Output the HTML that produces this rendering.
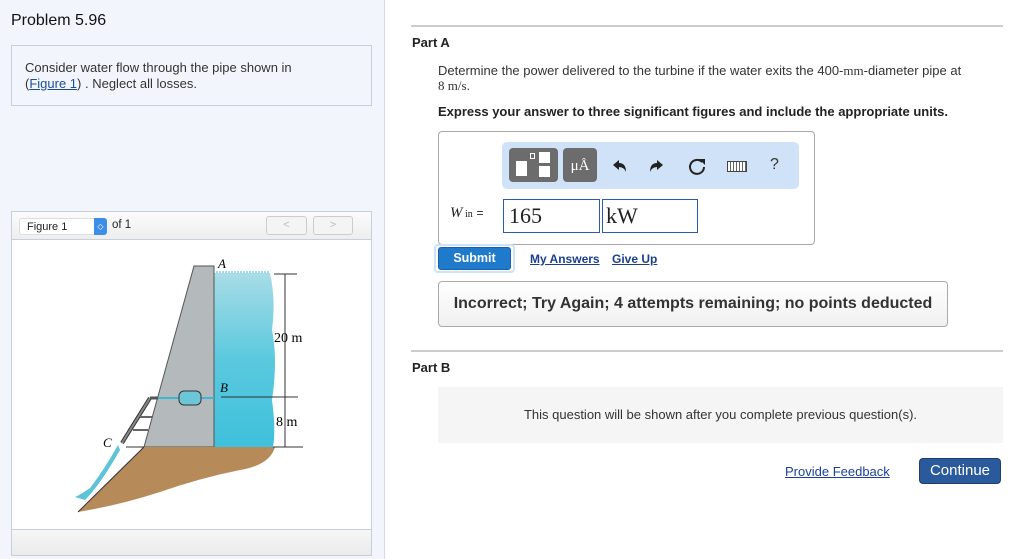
<!DOCTYPE html>
<html><head><style>
*{margin:0;padding:0;box-sizing:border-box}
body{width:1024px;height:559px;position:relative;background:#fff;font-family:"Liberation Sans",Arial,sans-serif;color:#222;overflow:hidden}
.a{position:absolute}
.serif{font-family:"Liberation Serif",serif}
</style></head><body>
<div class="a" style="left:0;top:0;width:385px;height:559px;background:#f2f6fc;border-right:1px solid #d4dbe4"></div>
<div class="a" style="left:11px;top:12px;font-size:16px;color:#111">Problem 5.96</div>
<div class="a" style="left:11px;top:45px;width:361px;height:61px;border:1px solid #c6d0dc;background:#f2f6fc"></div>
<div class="a" style="left:25px;top:60px;font-size:13px;line-height:16px;color:#333">Consider water flow through the pipe shown in<br>(<span style="color:#1a4f9c;text-decoration:underline">Figure 1</span>) . Neglect all losses.</div>

<div class="a" style="left:11px;top:211px;width:361px;height:345px;border:1px solid #c6d0dc;background:#fff"></div>
<div class="a" style="left:12px;top:212px;width:359px;height:28px;background:linear-gradient(#fbfbfb,#eeeeee);border-bottom:1px solid #c6d0dc"></div>
<div class="a" style="left:19px;top:218px;width:88px;height:17px;background:#fff;border:1px solid #ddd;border-radius:3px;font-size:11px;padding:2px 0 0 7px">Figure 1</div>
<div class="a" style="left:94px;top:218px;width:13px;height:17px;background:#3d8ee8;border-radius:0 3px 3px 0;color:#fff;font-size:8px;text-align:center;line-height:17px">◇</div>
<div class="a" style="left:112px;top:219px;font-size:11.5px">of 1</div>
<div class="a" style="left:266px;top:216px;width:41px;height:19px;border:1px solid #ccc;border-radius:3px;background:#f4f4f4;color:#bbb;font-size:11px;text-align:center;line-height:17px">&lt;</div>
<div class="a" style="left:313px;top:216px;width:40px;height:19px;border:1px solid #ccc;border-radius:3px;background:#f4f4f4;color:#bbb;font-size:11px;text-align:center;line-height:17px">&gt;</div>
<div class="a" style="left:12px;top:529px;width:359px;height:26px;background:linear-gradient(#f6f6f6,#ebebeb);border-top:1px solid #c6d0dc"></div>

<svg class="a" style="left:0;top:0" width="385" height="559">
<defs><linearGradient id="w" x1="0" y1="0" x2="0" y2="1"><stop offset="0" stop-color="#a8dce6"/><stop offset="0.5" stop-color="#5ac9de"/><stop offset="1" stop-color="#3fc0dc"/></linearGradient></defs>
<path d="M214 273 L270 273 Q276 300 272 330 Q278 360 272 400 Q276 430 273 447 L214 447Z" fill="url(#w)"/>
<path d="M194 266 L214 266 L214 447 L144 447Z" fill="#b4b9bc" stroke="#555" stroke-width="1"/>
<path d="M144 447 L275 447 Q270 465 240 470 Q200 478 160 492 Q120 505 78 512Z" fill="#b78a5a"/>
<path d="M144 447 L78 512" stroke="#333" stroke-width="1"/>
<path d="M118 445 Q104 470 90 488 Q80 495 75 497 L85 500 Q100 485 120 450Z" fill="#5cc3d8"/>
<line x1="158" y1="398" x2="214" y2="398" stroke="#3fb4d4" stroke-width="2"/>
<rect x="179" y="391" width="22" height="14" rx="5" fill="#6cc6d8" stroke="#333"/>
<path d="M150 398 L122 443" stroke="#333" stroke-width="4"/>
<path d="M150 398 L122 443" stroke="#888" stroke-width="2"/>
<line x1="150" y1="398" x2="158" y2="398" stroke="#555" stroke-width="3"/>
<line x1="140" y1="417" x2="152" y2="417" stroke="#666" stroke-width="2"/>
<line x1="133" y1="430" x2="148" y2="430" stroke="#666" stroke-width="2"/>
<line x1="126" y1="447" x2="144" y2="447" stroke="#333"/>
<line x1="216" y1="272" x2="270" y2="272" stroke="#3fb4d4" stroke-dasharray="2 1"/>
<line x1="274" y1="274" x2="297" y2="274" stroke="#333"/>
<line x1="285" y1="274" x2="285" y2="447" stroke="#333"/>
<line x1="221" y1="397" x2="298" y2="397" stroke="#333"/>
<line x1="273" y1="447" x2="303" y2="447" stroke="#333"/>
<text x="218" y="268" font-family="Liberation Serif" font-style="italic" font-size="13">A</text>
<text x="220" y="392" font-family="Liberation Serif" font-style="italic" font-size="13">B</text>
<text x="103" y="447" font-family="Liberation Serif" font-style="italic" font-size="13">C</text>
<text x="274" y="342" font-family="Liberation Serif" font-size="14">20 m</text>
<text x="276" y="426" font-family="Liberation Serif" font-size="14">8 m</text>
</svg>

<div class="a" style="left:411px;top:25px;width:592px;height:2px;background:#ccc"></div>
<div class="a" style="left:412px;top:35px;font-size:13px;font-weight:bold;color:#222">Part A</div>
<div class="a" style="left:438px;top:63px;font-size:13px;line-height:15px;color:#333">Determine the power delivered to the turbine if the water exits the 400-<span class="serif">mm</span>-diameter pipe at<br><span class="serif">8 m/s</span>.</div>
<div class="a" style="left:438px;top:104px;font-size:13px;font-weight:bold;color:#222">Express your answer to three significant figures and include the appropriate units.</div>

<div class="a" style="left:438px;top:131px;width:377px;height:114px;border:1px solid #aaa;border-radius:4px"></div>
<div class="a" style="left:502px;top:142px;width:297px;height:47px;background:#cfe2f7;border-radius:5px"></div>
<div class="a" style="left:509px;top:148px;width:49px;height:34px;background:#6c6c6c;border-radius:4px"></div>
<div class="a" style="left:516px;top:161px;width:11px;height:15px;background:#fff"></div>
<div class="a" style="left:530px;top:153px;width:5px;height:6px;border:1px solid #fff"></div>
<div class="a" style="left:539px;top:152px;width:11px;height:11px;background:#fff"></div>
<div class="a" style="left:539px;top:166px;width:11px;height:11px;background:#fff"></div>
<div class="a" style="left:563px;top:148px;width:34px;height:34px;background:#6c6c6c;border-radius:4px;color:#fff;font-family:'Liberation Serif',serif;font-size:15px;text-align:center;line-height:36px">μÅ</div>
<svg class="a" style="left:610px;top:159px" width="60" height="20">
<path d="M3 6 L9 1 L9 4 Q16 4 16 13 Q14 8 9 8 L9 11Z" fill="#222"/>
<path d="M53 6 L47 1 L47 4 Q40 4 40 13 Q42 8 47 8 L47 11Z" fill="#222"/>
</svg>
<svg class="a" style="left:688px;top:157px" width="20" height="20">
<path d="M14 5 A7 7 0 1 0 16 10" fill="none" stroke="#222" stroke-width="2"/>
<path d="M11 2 L17 2 L17 8Z" fill="#222"/>
</svg>
<div class="a" style="left:727px;top:161px;width:20px;height:11px;border:1px solid #444;background:repeating-linear-gradient(90deg,#fff 0 2px,#666 2px 3px)"></div>
<div class="a" style="left:770px;top:156px;font-size:16px;color:#333">?</div>
<div class="a serif" style="left:450px;top:205px;font-size:15px;font-style:italic">W<span style="font-size:10px;font-style:normal"> in</span> <span style="font-family:'Liberation Sans';font-style:normal;font-size:12px">=</span></div>
<div class="a serif" style="left:503px;top:199px;width:97px;height:34px;border:1px solid #2a5db0;font-size:22px;padding:3px 0 0 5px">165</div>
<div class="a serif" style="left:602px;top:199px;width:96px;height:34px;border:1px solid #2a5db0;font-size:22px;padding:3px 0 0 3px">kW</div>

<div class="a" style="left:434px;top:244px;width:81px;height:29px;border:2px solid #cfe2f7;border-radius:4px"></div>
<div class="a" style="left:438px;top:247px;width:73px;height:23px;background:#1f7acb;border:1px solid #1a62a8;border-radius:3px;color:#fff;font-size:12.5px;font-weight:bold;text-align:center;line-height:21px">Submit</div>
<div class="a" style="left:530px;top:252px;font-size:12px;font-weight:bold;color:#1a3f8c;text-decoration:underline">My Answers</div>
<div class="a" style="left:612px;top:252px;font-size:12px;font-weight:bold;color:#1a3f8c;text-decoration:underline">Give Up</div>

<div class="a" style="left:438px;top:281px;width:510px;height:46px;border:1px solid #aaa;border-radius:4px;background:linear-gradient(#fff,#f0f0f0);font-size:16px;font-weight:bold;color:#333;text-align:center;line-height:44px">Incorrect; Try Again; 4 attempts remaining; no points deducted</div>

<div class="a" style="left:411px;top:350px;width:592px;height:2px;background:#ccc"></div>
<div class="a" style="left:412px;top:360px;font-size:13px;font-weight:bold">Part B</div>
<div class="a" style="left:438px;top:387px;width:565px;height:56px;background:#f5f5f5;font-size:13px;color:#333;text-align:center;line-height:56px">This question will be shown after you complete previous question(s).</div>

<div class="a" style="left:785px;top:464px;font-size:13px;color:#1a3f9c;text-decoration:underline">Provide Feedback</div>
<div class="a" style="left:919px;top:458px;width:82px;height:26px;background:#2a5a9c;border:1px solid #1c3f70;border-radius:4px;color:#fff;font-size:15px;text-align:center;line-height:24px">Continue</div>
</body></html>
